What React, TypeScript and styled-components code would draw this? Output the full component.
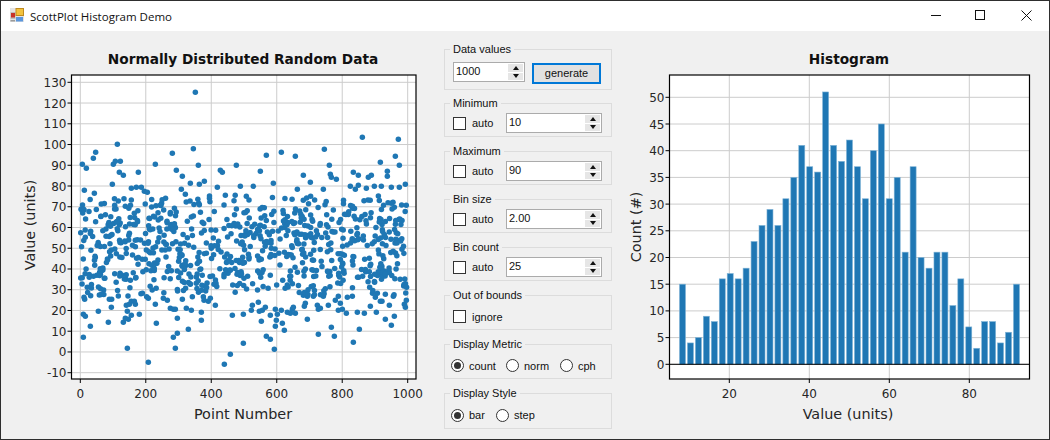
import React from "react";
import styled, { createGlobalStyle } from "styled-components";

const Global = createGlobalStyle`
  html, body { margin: 0; padding: 0; background: #f0f0f0; }
  * { box-sizing: border-box; }
`;

const Window = styled.div`
  width: 1050px;
  height: 440px;
  border: 1px solid #2e2e2e;
  background: #f0f0f0;
  display: flex;
  flex-direction: column;
  overflow: hidden;
  font-family: "Liberation Sans", Arial, sans-serif;
  font-size: 11px;
  color: #111;
`;

const TitleBar = styled.div`
  height: 30px;
  flex: none;
  background: #fff;
  display: flex;
  align-items: center;
  padding-left: 9px;
`;

const AppIconBox = styled.svg`
  width: 14px;
  height: 14px;
  flex: none;
  margin-bottom: 2px;
`;

const AppTitle = styled.span`
  margin-left: 6px;
  font-family: "Open Sans", "Noto Sans", sans-serif;
  font-size: 11.5px;
  flex: 1;
`;

const WinButton = styled.div<{ $nudge?: number }>`
  width: 46px;
  height: 30px;
  display: flex;
  align-items: center;
  justify-content: center;
  padding-bottom: 2px;
  padding-left: ${(p) => p.$nudge ?? 0}px;
`;

const Content = styled.div`
  flex: 1;
  display: flex;
  min-height: 0;
`;

const Plot = styled.svg<{ $w: number }>`
  width: ${(p) => p.$w}px;
  height: 408px;
  flex: none;
  display: block;
`;

const Controls = styled.div`
  width: 168px;
  flex: none;
  margin: 18px 8px 0 4px;
  display: flex;
  flex-direction: column;
`;

const Group = styled.div<{ $h: number; $gap: number; $pt: number }>`
  position: relative;
  height: ${(p) => p.$h}px;
  margin-bottom: ${(p) => p.$gap}px;
  border: 1px solid #dcdcdc;
  display: flex;
  align-items: center;
  padding: ${(p) => p.$pt}px 8px 0 8px;
`;

const Legend = styled.span`
  position: absolute;
  left: 5px;
  top: -9px;
  padding: 0 3px;
  background: #f0f0f0;
  line-height: 16px;
  white-space: nowrap;
`;

const Spinner = styled.div<{ $w: number }>`
  width: ${(p) => p.$w}px;
  height: 20px;
  flex: none;
  border: 1px solid #ababab;
  background: #fff;
  display: flex;
  align-items: stretch;
  padding: 1px;
`;

const SpinText = styled.span`
  flex: 1;
  line-height: 15px;
  padding-left: 1px;
`;

const SpinButtons = styled.div`
  width: 15px;
  display: flex;
  flex-direction: column;
  gap: 1px;
`;

const SpinButton = styled.div<{ $down?: boolean }>`
  flex: 1;
  background: #e6e6e6;
  display: flex;
  align-items: center;
  justify-content: center;
  &::after {
    content: "";
    width: 0;
    height: 0;
    border-left: 3.5px solid transparent;
    border-right: 3.5px solid transparent;
    ${(p) =>
      p.$down
        ? "border-top: 4px solid #111;"
        : "border-bottom: 4px solid #111;"}
  }
`;

const PrimaryButton = styled.div`
  width: 69px;
  height: 21px;
  margin: 2px 0 0 7px;
  flex: none;
  border: 2px solid #0078d7;
  background: #e1e1e1;
  display: flex;
  align-items: center;
  justify-content: center;
`;

const Check = styled.div`
  width: 13px;
  height: 13px;
  flex: none;
  border: 1px solid #333;
  background: #fff;
`;

const CheckLabel = styled.span<{ $w?: number }>`
  margin-left: 6px;
  ${(p) => (p.$w ? `width: ${p.$w}px;` : "")}
`;

const Radio = styled.div<{ $on?: boolean }>`
  width: 13px;
  height: 13px;
  flex: none;
  border: 1px solid #333;
  border-radius: 50%;
  background: #fff;
  display: flex;
  align-items: center;
  justify-content: center;
  &::after {
    content: "";
    width: 7px;
    height: 7px;
    border-radius: 50%;
    background: ${(p) => (p.$on ? "#333" : "transparent")};
  }
`;

const RadioLabel = styled.span<{ $w: number }>`
  margin-left: 5px;
  width: ${(p) => p.$w}px;
  flex: none;
`;

const RadioRow = styled.div`
  display: flex;
  align-items: center;
  margin-left: -2px;
`;

const CHART_FONT = "'DejaVu Sans', sans-serif";

const TickLabel = styled.text`
  font-family: ${CHART_FONT};
  font-size: 12px;
  fill: #262626;
`;
const AxisLabel = styled.text`
  font-family: ${CHART_FONT};
  font-size: 14.4px;
  fill: #262626;
`;
const ChartTitle = styled.text`
  font-family: ${CHART_FONT};
  font-size: 13.7px;
  font-weight: 700;
  fill: #111;
`;

type P = [number, number];
const toPage = (ox: number, oy: number, list: number[][]): P[] =>
  list.map(([x, y]) => [ox + x / 3, oy + y / 3]);

const z8 = [[406,67],[172,223],[107,247],[100,265],[67,283],[79,295],[160,283],[166,274],[181,274],[178,307],[190,316],[235,307],[286,283],[337,250],[400,236],[415,286],[349,301],[367,319],[391,340],[418,343],[433,334],[364,358],[376,373],[481,301],[487,307],[472,352],[157,343],[73,361],[103,370],[214,355],[229,352],[244,352],[253,364],[262,367],[496,376]];
const z10 = [[4,271],[94,241],[139,232],[181,244],[268,223],[283,271],[382,187],[490,193],[481,244],[493,271],[436,262],[76,289],[205,301],[226,322],[115,325],[16,334],[55,334],[286,298],[289,307],[304,313],[355,292],[370,301],[400,307],[409,301],[457,289],[457,304],[346,334],[370,331],[394,340],[418,334],[439,334],[469,337],[493,337],[511,328],[187,343],[265,343],[361,343]];
const z9 = [[92,197],[72,202],[74,208],[148,208],[155,208],[118,195],[204,198],[175,198],[260,200],[265,205],[310,205],[322,211],[367,208],[397,200],[430,200],[432,211],[445,214],[451,205],[466,226],[286,223],[199,226],[208,223],[214,214],[223,214],[226,223],[154,232],[115,244],[202,244],[214,256],[238,253],[70,253],[76,259],[91,289],[145,277],[190,277],[196,265],[205,268],[289,280],[331,235],[340,238],[346,238],[352,265],[379,235],[394,241],[424,247],[424,271],[385,298],[352,310],[340,322],[70,322],[202,355],[346,355],[265,397],[511,373],[493,403],[517,256]];
const z11 = [[25,73],[52,46],[70,37],[49,61],[73,64],[82,61],[91,52],[106,76],[79,94],[121,58],[127,73],[139,61],[124,91],[142,100],[121,109],[148,121],[94,139],[106,148],[25,160],[118,178],[157,67],[166,70],[172,58],[175,52],[181,70],[217,88],[208,49],[211,40],[247,46],[250,58],[256,55],[280,46],[289,112],[250,133],[298,139],[316,40],[310,61],[322,58],[334,70],[301,31],[367,67],[388,70],[406,49],[424,67],[451,88],[469,106],[478,79],[373,118],[355,157],[463,46],[436,34],[441,34],[508,43],[511,52],[514,31],[205,16],[217,19],[235,19],[265,19],[310,19],[337,22],[352,19],[421,22],[427,10],[451,13],[475,19]];

function bandPoints(): P[] {
  let s = 20210417;
  const rnd = () => {
    s = (s + 0x6d2b79f5) | 0;
    let t = Math.imul(s ^ (s >>> 15), 1 | s);
    t = (t + Math.imul(t ^ (t >>> 7), 61 | t)) ^ t;
    return ((t ^ (t >>> 14)) >>> 0) / 4294967296;
  };
  const out: P[] = [];
  while (out.length < 770) {
    const g = Math.sqrt(-2 * Math.log(rnd() + 1e-9)) * Math.cos(2 * Math.PI * rnd());
    const y = 250 + g * 40;
    const x = 80 + rnd() * 327;
    if (y >= 195 && y <= 295) out.push([x, y]);
  }
  return out;
}

const scatter: P[] = [
  ...toPage(60, 70, z8),
  ...toPage(235, 75, z10),
  ...toPage(60, 230, z9),
  ...toPage(235, 290, z11),
  ...bandPoints(),
];

const bins = [15,4,5,9,8,16,17,16,18,23,26,29,26,31,35,41,37,36,51,41,38,42,37,31,40,45,31,35,21,37,20,18,21,21,11,16,7,3,8,8,4,6,15];

const GRID = "#cccccc";

function LeftPlot() {
  const L = 71.5, R = 416, T = 75, B = 379;
  const yOf = (v: number) => 372.7 - (v + 10) * 2.0743;
  const xOf = (v: number) => 80.3 + v * 0.3274;
  const ys = Array.from({ length: 15 }, (_, i) => i * 10 - 10);
  const xs = [0, 200, 400, 600, 800, 1000];
  return (
    <Plot $w={439} viewBox="1 31 439 408">
      <rect x={L} y={T} width={R - L} height={B - T} fill="#fff" />
      {ys.map((v) => (
        <line key={v} x1={L} x2={R} y1={yOf(v)} y2={yOf(v)} stroke={GRID} strokeWidth={1} />
      ))}
      {xs.map((v) => (
        <line key={v} x1={xOf(v)} x2={xOf(v)} y1={T} y2={B} stroke={GRID} strokeWidth={1} />
      ))}
      {scatter.map(([x, y], i) => (
        <circle key={i} cx={x} cy={y} r={2.75} fill="#1f77b4" />
      ))}
      <rect x={L} y={T} width={R - L} height={B - T} fill="none" stroke="#000" strokeWidth={1.2} />
      {ys.map((v) => (
        <g key={v}>
          <line x1={L - 4} x2={L} y1={yOf(v)} y2={yOf(v)} stroke="#000" />
          <TickLabel x={L - 5} y={yOf(v) + 4.5} textAnchor="end">{v < 0 ? "-10" : v}</TickLabel>
        </g>
      ))}
      {xs.map((v) => (
        <g key={v}>
          <line x1={xOf(v)} x2={xOf(v)} y1={B} y2={B + 4} stroke="#000" />
          <TickLabel x={xOf(v)} y={398} textAnchor="middle">{v}</TickLabel>
        </g>
      ))}
      <ChartTitle x={243} y={64} textAnchor="middle">Normally Distributed Random Data</ChartTitle>
      <AxisLabel x={243} y={419} textAnchor="middle">Point Number</AxisLabel>
      <AxisLabel transform="translate(35 225) rotate(-90)" textAnchor="middle">Value (units)</AxisLabel>
    </Plot>
  );
}

function RightPlot() {
  const L = 669.5, R = 1029.5, T = 75, B = 379;
  const yOf = (v: number) => 364.3 - v * 5.34;
  const xOf = (v: number) => 729.3 + (v - 20) * 4;
  const ys = [0, 5, 10, 15, 20, 25, 30, 35, 40, 45, 50];
  const xs = [20, 40, 60, 80];
  return (
    <Plot $w={429} viewBox="620 31 429 408">
      <rect x={L} y={T} width={R - L} height={B - T} fill="#fff" />
      {ys.map((v) => (
        <line key={v} x1={L} x2={R} y1={yOf(v)} y2={yOf(v)} stroke={GRID} strokeWidth={1} />
      ))}
      {xs.map((v) => (
        <line key={v} x1={xOf(v)} x2={xOf(v)} y1={T} y2={B} stroke={GRID} strokeWidth={1} />
      ))}
      {bins.map((n, i) => (
        <rect
          key={i}
          x={679.5 + 7.952 * i}
          y={yOf(n)}
          width={6}
          height={n * 5.34}
          fill="#1f77b4"
          stroke="#7fb3d6"
          strokeWidth={0.6}
        />
      ))}
      <line x1={L} x2={R} y1={yOf(0)} y2={yOf(0)} stroke="#000" strokeWidth={1} />
      <rect x={L} y={T} width={R - L} height={B - T} fill="none" stroke="#000" strokeWidth={1.2} />
      {ys.map((v) => (
        <g key={v}>
          <line x1={L - 4} x2={L} y1={yOf(v)} y2={yOf(v)} stroke="#000" />
          <TickLabel x={L - 5} y={yOf(v) + 4.5} textAnchor="end">{v}</TickLabel>
        </g>
      ))}
      {xs.map((v) => (
        <g key={v}>
          <line x1={xOf(v)} x2={xOf(v)} y1={B} y2={B + 4} stroke="#000" />
          <TickLabel x={xOf(v)} y={398} textAnchor="middle">{v}</TickLabel>
        </g>
      ))}
      <ChartTitle x={849} y={64} textAnchor="middle">Histogram</ChartTitle>
      <AxisLabel x={848} y={419} textAnchor="middle">Value (units)</AxisLabel>
      <AxisLabel transform="translate(641 227) rotate(-90)" textAnchor="middle">Count (#)</AxisLabel>
    </Plot>
  );
}

const NumberBox = ({ value, w }: { value: string; w: number }) => (
  <Spinner $w={w}>
    <SpinText>{value}</SpinText>
    <SpinButtons>
      <SpinButton />
      <SpinButton $down />
    </SpinButtons>
  </Spinner>
);

const AutoGroup = ({ title, value }: { title: string; value: string }) => (
  <Group $h={34} $gap={14} $pt={6}>
    <Legend>{title}</Legend>
    <Check />
    <CheckLabel $w={34}>auto</CheckLabel>
    <NumberBox value={value} w={96} />
  </Group>
);

const AppIcon = () => (
  <AppIconBox viewBox="0 0 14 14">
    <rect x="0" y="0" width="14" height="14" fill="#e4e4e4" />
    <rect x="0.5" y="4" width="5" height="7" fill="#bdbdbd" />
    <rect x="1" y="5" width="4" height="4.5" fill="#c8322a" />
    <rect x="6" y="0.5" width="7.5" height="7" fill="#f2c23e" stroke="#c08a1e" strokeWidth="1" />
    <rect x="6" y="9" width="7" height="4.5" fill="#5b96dc" />
    <rect x="0.5" y="12" width="4.5" height="1.5" fill="#9a9a9a" />
  </AppIconBox>
);

export default function App() {
  return (
    <>
      <Global />
      <Window>
        <TitleBar>
          <AppIcon />
          <AppTitle>ScottPlot Histogram Demo</AppTitle>
          <WinButton $nudge={4}>
            <svg width="10" height="10" viewBox="0 0 10 10"><path d="M0 5.5H10" stroke="#111" /></svg>
          </WinButton>
          <WinButton>
            <svg width="10" height="10" viewBox="0 0 10 10"><rect x="0.5" y="0.5" width="9" height="9" fill="none" stroke="#111" /></svg>
          </WinButton>
          <WinButton>
            <svg width="11" height="11" viewBox="0 0 11 11"><path d="M0.5 0.5L10.5 10.5M10.5 0.5L0.5 10.5" stroke="#111" /></svg>
          </WinButton>
        </TitleBar>
        <Content>
          <LeftPlot />
          <Controls>
            <Group $h={41} $gap={13} $pt={5}>
              <Legend>Data values</Legend>
              <NumberBox value="1000" w={72} />
              <PrimaryButton>generate</PrimaryButton>
            </Group>
            <AutoGroup title="Minimum" value="10" />
            <AutoGroup title="Maximum" value="90" />
            <AutoGroup title="Bin size" value="2.00" />
            <AutoGroup title="Bin count" value="25" />
            <Group $h={35} $gap={14} $pt={8}>
              <Legend>Out of bounds</Legend>
              <Check />
              <CheckLabel>ignore</CheckLabel>
            </Group>
            <Group $h={35} $gap={14} $pt={8}>
              <Legend>Display Metric</Legend>
              <RadioRow>
                <Radio $on />
                <RadioLabel $w={37}>count</RadioLabel>
                <Radio />
                <RadioLabel $w={36}>norm</RadioLabel>
                <Radio />
                <RadioLabel $w={30}>cph</RadioLabel>
              </RadioRow>
            </Group>
            <Group $h={36} $gap={0} $pt={8}>
              <Legend>Display Style</Legend>
              <RadioRow>
                <Radio $on />
                <RadioLabel $w={27}>bar</RadioLabel>
                <Radio />
                <RadioLabel $w={30}>step</RadioLabel>
              </RadioRow>
            </Group>
          </Controls>
          <RightPlot />
        </Content>
      </Window>
    </>
  );
}
